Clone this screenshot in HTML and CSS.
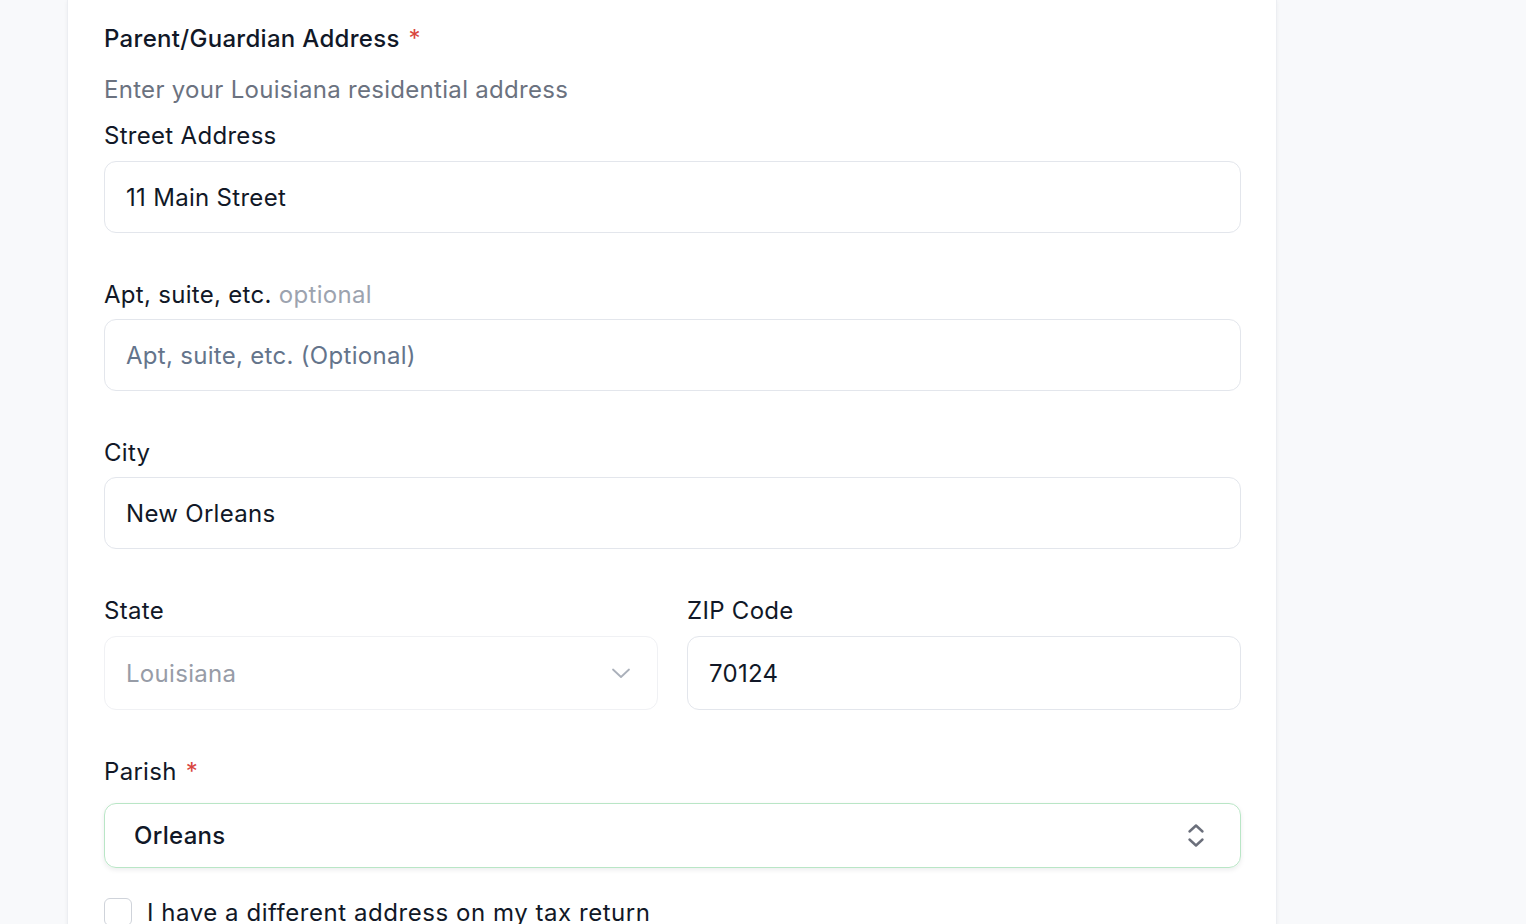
FILE: index.html
```html
<!DOCTYPE html>
<html lang="en">
<head>
<meta charset="utf-8">
<title>Parent/Guardian Address</title>
<link rel="stylesheet" href="styles.css">
</head>
<body>
<main class="page">
  <section class="card">
    <div class="group-title">Parent/Guardian Address <span class="req">*</span></div>
    <p class="helper">Enter your Louisiana residential address</p>

    <div class="field field-first">
      <label class="label">Street Address</label>
      <div class="input"><span class="value">11 Main Street</span></div>
    </div>

    <div class="field">
      <label class="label">Apt, suite, etc. <span class="optional">optional</span></label>
      <div class="input"><span class="placeholder">Apt, suite, etc. (Optional)</span></div>
    </div>

    <div class="field">
      <label class="label">City</label>
      <div class="input"><span class="value">New Orleans</span></div>
    </div>

    <div class="field row">
      <div class="col">
        <label class="label label-row">State</label>
        <div class="input input-tall select-disabled">
          <span class="disabled-text">Louisiana</span>
          <svg class="chev" width="20" height="12" viewBox="0 0 20 12" fill="none"><path d="M2 2.5 L10 10 L18 2.5" stroke="#aab0ba" stroke-width="1.8" stroke-linecap="round" stroke-linejoin="round"/></svg>
        </div>
      </div>
      <div class="col">
        <label class="label label-row">ZIP Code</label>
        <div class="input input-tall"><span class="value">70124</span></div>
      </div>
    </div>

    <div class="field">
      <label class="label label-parish">Parish <span class="req">*</span></label>
      <div class="parish">
        <span class="value">Orleans</span>
        <svg class="updown" width="18" height="26" viewBox="0 0 18 26" fill="none"><path d="M2.5 8.5 L9 2.5 L15.5 8.5" stroke="#6b6f7b" stroke-width="2.4" stroke-linecap="round" stroke-linejoin="round"/><path d="M2.5 16.5 L9 22.5 L15.5 16.5" stroke="#6b6f7b" stroke-width="2.4" stroke-linecap="round" stroke-linejoin="round"/></svg>
      </div>
    </div>

    <div class="check-row">
      <span class="checkbox"></span>
      <span class="check-label">I have a different address on my tax return</span>
    </div>
  </section>
</main>
</body>
</html>
```

FILE: styles.css
```css
* { box-sizing: border-box; }

html, body {
  margin: 0;
  padding: 0;
  background: #f8f9fb;
  height: 924px;
  overflow: hidden;
  font-family: Inter, "Noto Sans", "Liberation Sans", sans-serif;
  color: #111827;
  letter-spacing: 0.3px;
}

.page {
  padding-left: 67px;
}

.card {
  width: 1210px;
  min-height: 980px;
  background: #ffffff;
  border-left: 1px solid #eceef2;
  border-right: 1px solid #eceef2;
  box-shadow: 0 1px 4px rgba(16, 24, 40, 0.05);
  padding: 24px 35px 0 36px;
}

.group-title {
  font-size: 24px;
  line-height: 30px;
  font-weight: 500;
  color: #111827;
  margin-bottom: 21px;
}

.req {
  color: #d9463e;
  font-weight: 400;
  margin-left: 2px;
}

.helper {
  margin: 0 0 16px 0;
  font-size: 24px;
  line-height: 30px;
  color: #6b7280;
}

.field {
  margin-top: 46px;
}

.field-first {
  margin-top: 0;
}

.label {
  display: block;
  font-size: 24px;
  line-height: 30px;
  color: #111827;
  padding-top: 1px;
  margin-bottom: 9px;
}

.field-first .label {
  padding-top: 0;
  margin-bottom: 10px;
}

.label-row {
  margin-bottom: 10px;
}

.label-parish {
  margin-bottom: 16px;
}

.optional {
  color: #9ca3af;
}

.input {
  height: 72px;
  border: 1px solid #e3e6ec;
  border-radius: 12px;
  background: #ffffff;
  display: flex;
  align-items: center;
  padding: 0 21px;
  font-size: 24px;
}

.input-tall {
  height: 74px;
}

.value {
  color: #111827;
}

.placeholder {
  color: #64748b;
}

.row {
  display: grid;
  grid-template-columns: 1fr 1fr;
  column-gap: 29px;
}

.select-disabled {
  border-color: #f0f1f4;
  justify-content: space-between;
  padding-right: 26px;
}

.disabled-text {
  color: #979ca7;
}

.chev {
  display: block;
}

.parish {
  height: 65px;
  border: 1px solid #b9e6c6;
  border-radius: 12px;
  box-shadow: 0 2px 5px rgba(16, 24, 40, 0.08);
  display: flex;
  align-items: center;
  justify-content: space-between;
  padding: 0 35px 0 29px;
  font-size: 24px;
  font-weight: 500;
}

.updown {
  display: block;
}

.check-row {
  display: flex;
  align-items: center;
  margin-top: 29px;
  gap: 15px;
}

.checkbox {
  width: 28px;
  height: 28px;
  border: 1.5px solid #cfd3da;
  border-radius: 6px;
  background: #ffffff;
  flex: none;
}

.check-label {
  font-size: 24px;
  line-height: 28px;
  padding-top: 2px;
  color: #111827;
  letter-spacing: 0.55px;
}
```
